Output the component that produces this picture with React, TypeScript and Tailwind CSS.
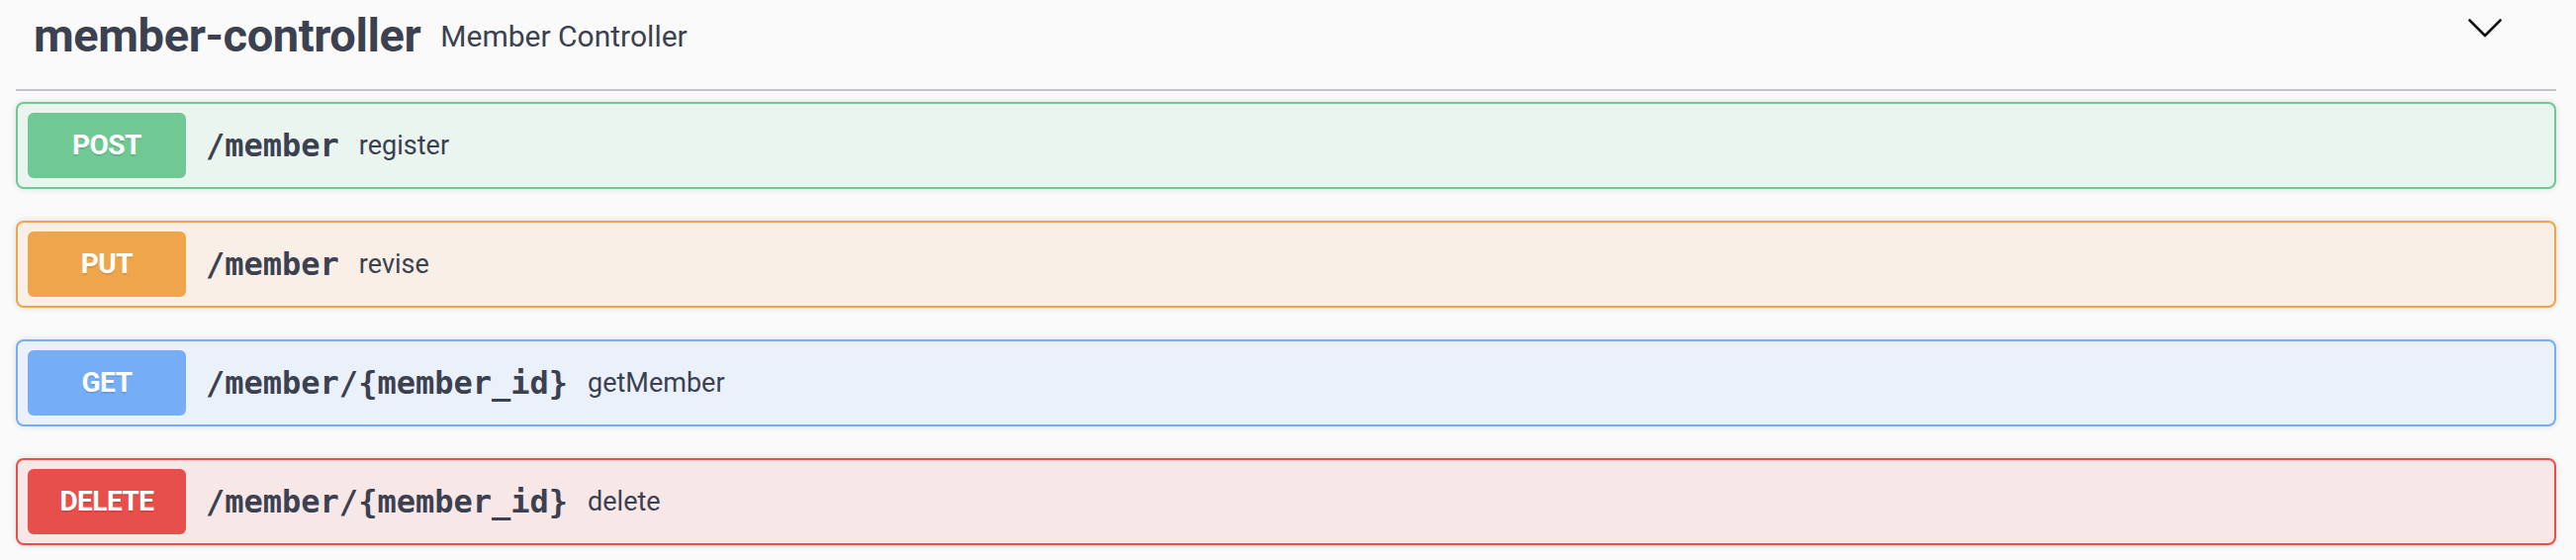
import React from 'react';

type Method = 'POST' | 'PUT' | 'GET' | 'DELETE';

interface Operation {
  method: Method;
  path: string;
  summary: string;
}

const styles: Record<Method, { box: string; badge: string }> = {
  POST: { box: 'border-[#6fc994] bg-[#ebf5f0]', badge: 'bg-[#70c995]' },
  PUT: { box: 'border-[#f0a54a] bg-[#f9efe6]', badge: 'bg-[#efa64a]' },
  GET: { box: 'border-[#75aef7] bg-[#ebf1fb]', badge: 'bg-[#75aef7]' },
  DELETE: { box: 'border-[#e7504a] bg-[#f8e7e7]', badge: 'bg-[#e7504a]' },
};

const operations: Operation[] = [
  { method: 'POST', path: '/member', summary: 'register' },
  { method: 'PUT', path: '/member', summary: 'revise' },
  { method: 'GET', path: '/member/{member_id}', summary: 'getMember' },
  { method: 'DELETE', path: '/member/{member_id}', summary: 'delete' },
];

const ChevronIcon: React.FC<{ className?: string }> = ({ className }) => (
  <svg width="36" height="22" viewBox="0 0 36 22" fill="none" className={className}>
    <polyline points="2.5,2.5 18,18 33.5,2.5" stroke="#111" strokeWidth="2.6" strokeLinecap="round" strokeLinejoin="round" />
  </svg>
);

const OpBlock: React.FC<{ op: Operation }> = ({ op }) => (
  <div
    className={`mb-[32px] flex h-[88px] items-center rounded-[8px] border-2 pl-[10px] shadow-[0_0_6px_rgba(0,0,0,0.12)] ${styles[op.method].box}`}
  >
    <span
      className={`flex h-[66px] w-[160px] shrink-0 items-center justify-center rounded-[6px] text-[28px] font-bold tracking-[-0.5px] text-white [text-shadow:0_2px_0_rgba(0,0,0,0.1)] ${styles[op.method].badge}`}
    >
      {op.method}
    </span>
    <span className="px-[20px] font-['DejaVu_Sans_Mono',monospace] text-[32px] font-bold text-[#3b4151]">
      {op.path}
    </span>
    <span className="text-[27px] text-[#3b4151]">{op.summary}</span>
  </div>
);

export default function App() {
  return (
    <div className="min-h-screen bg-[#fafafa] pl-[16px] pr-[20px] font-['Roboto',sans-serif]">
      <div className="mb-[11px] flex h-[92px] items-start border-b-2 border-[#c3c4ca]">
        <div className="flex flex-1 items-center pl-[18px] pt-[8px]">
          <h4 className="text-[47px] font-bold leading-[56px] tracking-[-0.4px] text-[#3b4151]">member-controller</h4>
          <small className="pl-[20px] text-[30px] text-[#3b4151]">Member Controller</small>
        </div>
        <ChevronIcon className="mr-[54px] mt-[18px]" />
      </div>
      {operations.map((op, i) => (
        <OpBlock key={i} op={op} />
      ))}
    </div>
  );
}
